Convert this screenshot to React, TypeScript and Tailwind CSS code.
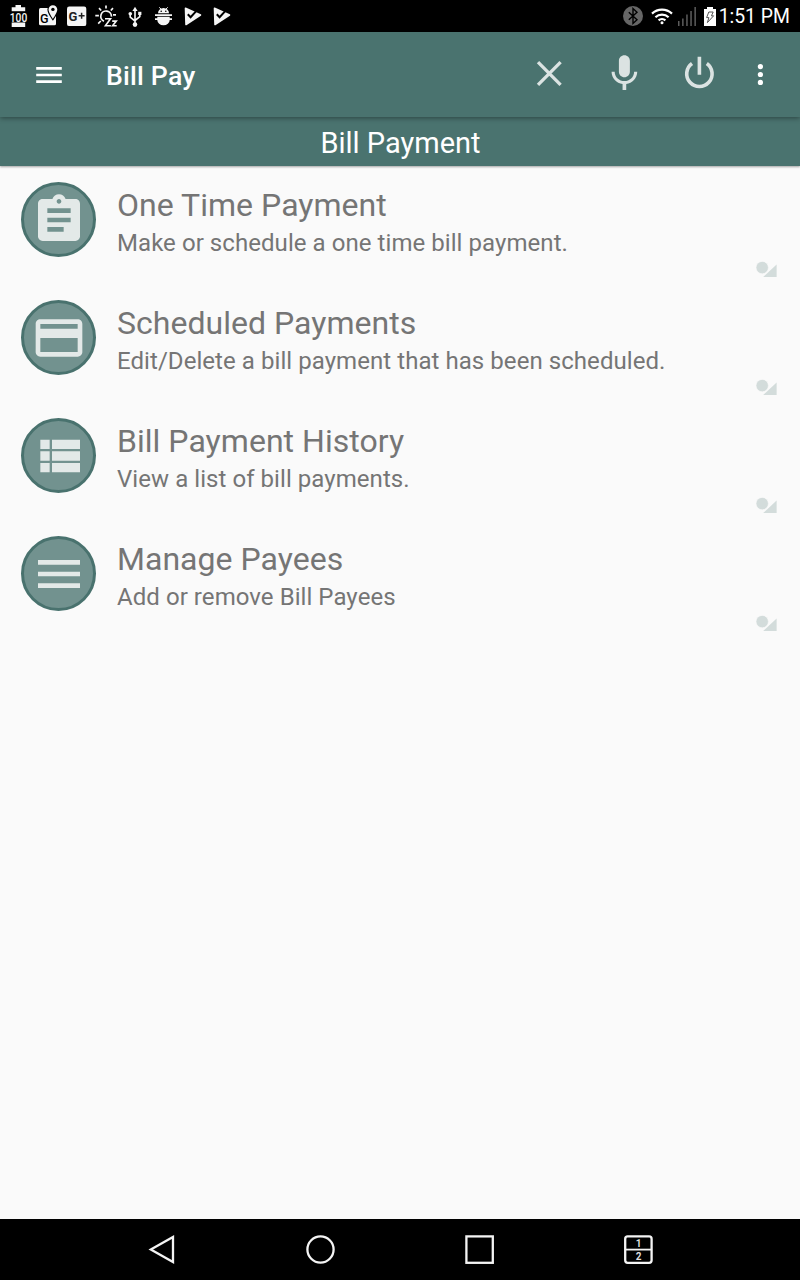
import React from 'react'

type MenuItem = {
  title: string
  description: string
  icon: string
}

const menuItems: MenuItem[] = [
  {
    title: 'One Time Payment',
    description: 'Make or schedule a one time bill payment.',
    icon: 'M19 3h-4.18C14.4 1.84 13.3 1 12 1c-1.3 0-2.4.84-2.82 2H5c-1.1 0-2 .9-2 2v14c0 1.1.9 2 2 2h14c1.1 0 2-.9 2-2V5c0-1.1-.9-2-2-2zm-7 0c.55 0 1 .45 1 1s-.45 1-1 1-1-.45-1-1 .45-1 1-1zm2 14H7v-2h7v2zm3-4H7v-2h10v2zm0-4H7V7h10v2z',
  },
  {
    title: 'Scheduled Payments',
    description: 'Edit/Delete a bill payment that has been scheduled.',
    icon: 'M20 4H4c-1.11 0-1.99.89-1.99 2L2 18c0 1.11.89 2 2 2h16c1.11 0 2-.89 2-2V6c0-1.11-.89-2-2-2zm0 14H4v-6h16v6zm0-10H4V6h16v2z',
  },
  {
    title: 'Bill Payment History',
    description: 'View a list of bill payments.',
    icon: 'M4 14h4v-4H4v4zm0 5h4v-4H4v4zM4 9h4V5H4v4zm5 5h12v-4H9v4zm0 5h12v-4H9v4zM9 5v4h12V5H9z',
  },
  {
    title: 'Manage Payees',
    description: 'Add or remove Bill Payees',
    icon: 'M3 18h18v-2H3v2zm0-5h18v-2H3v2zm0-7v2h18V6H3z',
  },
]

const StatusIcon: React.FC<{ children: React.ReactNode }> = ({ children }) => (
  <svg width="29" height="32" viewBox="0 0 29 32" fill="#f5f5f5" className="shrink-0">
    {children}
  </svg>
)

const PlayCheckIcon = () => (
  <StatusIcon>
    <path
      d="M7.5 8.2 L22.5 15 L8 24.5 Z"
      stroke="#f5f5f5"
      strokeWidth="1.6"
      strokeLinejoin="round"
    />
    <path d="M9.8 14.2 L12.6 17.2 L18.4 10.8" fill="none" stroke="#000" strokeWidth="2" />
  </StatusIcon>
)

const StatusBar = () => (
  <div className="flex h-8 items-center justify-between bg-black pl-1 pr-[10px] text-white">
    <div className="flex">
      {/* battery level */}
      <StatusIcon>
        <path d="M11.5 5h5.5v2.2h4.2V27H7.7V7.2h3.8z" />
        {/* dark band behind the digits */}
        <path d="M6 11.2h17v11.3H6z" fill="#000" />
        <text
          x="5.8"
          y="21.5"
          textLength="17.4"
          lengthAdjust="spacingAndGlyphs"
          className="font-['Roboto'] text-[13px] font-medium"
        >
          100
        </text>
      </StatusIcon>
      {/* maps */}
      <StatusIcon>
        <rect x="6" y="8" width="17" height="17.3" rx="1.5" />
        <text x="7" y="23" fill="#000" className="font-['Roboto'] text-[12.5px] font-medium">
          G
        </text>
        <path
          d="M19.9 5.2a4.4 4.4 0 0 0-4.4 4.4c0 3 4.4 9.3 4.4 9.3s4.4-6.3 4.4-9.3a4.4 4.4 0 0 0-4.4-4.4z"
          stroke="#000"
          strokeWidth="2.2"
          className="[paint-order:stroke]"
        />
        <circle cx="19.9" cy="9.4" r="1.7" fill="#000" />
      </StatusIcon>
      {/* google plus */}
      <StatusIcon>
        <rect x="5" y="6.5" width="19.3" height="19.6" rx="2.2" />
        <text x="6.4" y="20.9" fill="#222" className="font-['Roboto'] text-[13px] font-bold">
          G
        </text>
        <path d="M16.6 15.8h6M19.6 12.8v6" fill="none" stroke="#222" strokeWidth="1.5" />
      </StatusIcon>
      {/* sleep */}
      <StatusIcon>
        <g fill="none" stroke="#f5f5f5" strokeWidth="1.7">
          <path d="M13 21.2a5.3 5.3 0 1 1 7.4-4.6" />
          <path d="M15 5.5v3M8 8.2l2.2 2.3M22 8.2l-2.2 2.3M4.3 15.7h3.6M7.2 23.6l2.6-2.6M22 14.8h3" />
          <path d="M14 18.8h5.5l-5.1 7h5.5M21.2 21.1h4.1l-3.7 4.7h4.1" strokeWidth="1.6" />
        </g>
      </StatusIcon>
      {/* usb */}
      <StatusIcon>
        <g fill="none" stroke="#f5f5f5" strokeWidth="1.6">
          <path d="M15 10v14M10.2 14v3.2l4.8 3.8M19.8 14.5v2.2L15 20.5" />
        </g>
        <path d="M15 6.8l2.6 4.2h-5.2z" />
        <circle cx="10.3" cy="13.8" r="1.8" />
        <rect x="18.2" y="11.8" width="3.2" height="3.2" />
        <circle cx="15" cy="24.6" r="2.3" />
      </StatusIcon>
      {/* android debug */}
      <StatusIcon>
        <path d="M10.3 7.3l1.9 2M18.7 7.3l-1.9 2" stroke="#f5f5f5" strokeWidth="1" />
        <path d="M9 13.3a5.5 5.2 0 0 1 11 0z" />
        <path d="M6 14.3h17v1.6H6zM6 18.3h17v1.6H6z" />
        <path d="M8.3 16.8h12.4v3.2a6.2 5.2 0 0 1-12.4 0z" />
        <circle cx="12.2" cy="11.2" r=".8" fill="#000" />
        <circle cx="16.8" cy="11.2" r=".8" fill="#000" />
      </StatusIcon>
      <PlayCheckIcon />
      <PlayCheckIcon />
    </div>

    <div className="flex items-center">
      {/* bluetooth */}
      <svg width="20" height="20" viewBox="0 0 20 20">
        <circle cx="10" cy="10" r="10" fill="#666" />
        <path
          d="M5.8 6.2l8.2 7.6-4 3.6V2.6l4 3.6-8.2 7.6"
          fill="none"
          stroke="#000"
          strokeWidth="1.4"
        />
      </svg>
      {/* wifi */}
      <svg width="22" height="17" viewBox="0 0 22 17" className="ml-2">
        <g fill="none" stroke="#fff" strokeWidth="2.2">
          <path d="M1 5.6a14.5 14.5 0 0 1 20 0" />
          <path d="M4.4 9.2a9.6 9.6 0 0 1 13.2 0" />
          <path d="M7.6 12.4a5 5 0 0 1 6.8 0" />
        </g>
        <circle cx="11" cy="14.7" r="1.5" fill="#fff" />
      </svg>
      {/* signal */}
      <svg width="19" height="20" viewBox="0 0 19 20" className="ml-[5px]" fill="#5c5c5c">
        <path d="M0 15h1.5v5H0zM4.1 12.5h1.5V20H4.1zM8.2 8.5h1.5V20H8.2zM12.3 5h1.5v15h-1.5zM16.4 1h1.5v19h-1.5z" />
      </svg>
      {/* charging */}
      <svg width="12" height="19" viewBox="0 0 12 19" className="ml-[7px]">
        <path d="M3 0h6v2h3v17H0V2h3z" fill="#fff" />
        <path
          d="M4.8 5h4.4L7.4 8.8h2.2L3.4 15.6l1.5-5H2.6z"
          fill="none"
          stroke="#555"
          strokeWidth="1"
        />
      </svg>
      <span className="ml-[3px] pt-0.5 text-[19.4px] leading-[30px]">1:51 PM</span>
    </div>
  </div>
)

const AppBar = () => (
  <header className="relative z-10 flex h-[85px] items-center bg-[#4a736f] pl-9 text-white shadow-[0_1px_5px_rgba(0,0,0,0.42)]">
    <svg width="26" height="18" viewBox="0 0 26 18" fill="#fff" className="mt-px">
      <path d="M.2 1.1h25.6v2.6H.2zM.2 7.7h25.6v2.6H.2zM.2 14.3h25.6v2.6H.2z" />
    </svg>
    <h1 className="ml-11 pt-0.5 text-[26.67px] font-medium leading-8 tracking-[0.2px]">
      Bill Pay
    </h1>

    <div className="ml-auto flex h-full items-center text-[#dbe3e2]">
      <svg width="75" height="44" viewBox="0 0 75 44" className="-mt-[3px]">
        <path
          d="M26 11.1l22.6 22.8M48.6 11.1L26 33.9"
          stroke="currentColor"
          strokeWidth="3.3"
        />
      </svg>
      <svg width="75" height="44" viewBox="0 0 75 44" className="-mt-[3px]" fill="currentColor">
        <path
          transform="translate(15.4 .5) scale(1.8333)"
          d="M12 14c1.66 0 2.99-1.34 2.99-3L15 5c0-1.66-1.34-3-3-3S9 3.34 9 5v6c0 1.66 1.34 3 3 3zm5.3-3c0 3-2.54 5.1-5.3 5.1S6.7 14 6.7 11H5c0 3.41 2.72 6.23 6 6.72V21h2v-3.28c3.28-.48 6-3.3 6-6.72h-1.7z"
        />
      </svg>
      <svg width="75" height="44" viewBox="0 0 75 44" className="-mt-[3px]" fill="none">
        <path
          d="M37.4 5.8v18M30 12.5a12.7 12.7 0 1 0 14.8 0"
          stroke="currentColor"
          strokeWidth="3.6"
        />
      </svg>
      <svg width="63" height="44" viewBox="0 0 63 44" fill="#fff">
        <circle cx="23.4" cy="13.6" r="2.6" />
        <circle cx="23.4" cy="21.5" r="2.6" />
        <circle cx="23.4" cy="29.4" r="2.6" />
      </svg>
    </div>
  </header>
)

const MenuRow: React.FC<{ item: MenuItem }> = ({ item }) => (
  <li className="relative flex h-[118px] pl-[21px] pt-4">
    <div className="flex h-[75px] w-[75px] shrink-0 items-center justify-center rounded-full border-[3px] border-[#49726e] bg-[#72928f]">
      <svg width="56" height="56" viewBox="0 0 24 24" fill="#e3e9e8" className="shrink-0">
        <path d={item.icon} />
      </svg>
    </div>
    <div className="ml-[21px] text-[#757575]">
      <h3 className="mt-1 text-[32px] leading-[38px] tracking-[0.03px]">{item.title}</h3>
      <p className="text-[24px] leading-[38px] tracking-[0.06px]">{item.description}</p>
    </div>
    <svg
      width="22"
      height="17"
      viewBox="0 0 22 17"
      fill="#d3dcdb"
      className="absolute right-[22px] top-[95px]"
    >
      <path d="M20.6 3.5v12.6H7.2z" />
      <circle cx="6.2" cy="6.6" r="6.2" stroke="#fafafa" strokeWidth="0.6" />
    </svg>
  </li>
)

const NavigationBar = () => (
  <nav className="flex h-[61px] items-center bg-black pl-[82px]">
    <svg width="159" height="61" viewBox="0 0 159 61" fill="none" stroke="#f4f4f4" strokeWidth="2.3">
      <path d="M68.8 30.5L91 17.9v25.2z" />
    </svg>
    <svg width="159" height="61" viewBox="0 0 159 61" fill="none" stroke="#f4f4f4" strokeWidth="2.3">
      <circle cx="79.5" cy="30.5" r="13.1" />
    </svg>
    <svg width="159" height="61" viewBox="0 0 159 61" fill="none" stroke="#f4f4f4" strokeWidth="2.3">
      <rect x="66.4" y="17.4" width="26.4" height="26.4" />
    </svg>
    <svg width="159" height="61" viewBox="0 0 159 61" fill="none" stroke="#f4f4f4" strokeWidth="2.3">
      <rect x="66.2" y="17.4" width="26.4" height="26.4" rx="2.5" />
      <path d="M66.2 30.6h26.4" strokeWidth="1.8" />
      <g fill="#ddd" stroke="none" textAnchor="middle" className="font-['Roboto'] text-[10px] font-bold">
        <text x="79.5" y="27.6">1</text>
        <text x="79.5" y="40.8">2</text>
      </g>
    </svg>
  </nav>
)

export default function App() {
  return (
    <div className="flex h-[1280px] w-[800px] flex-col overflow-hidden bg-[#fafafa] font-['Roboto',sans-serif]">
      <StatusBar />
      <AppBar />
      <h2 className="h-[49px] shrink-0 bg-[#4a736f] pl-px pt-0.5 text-center text-[29px] leading-[49px] text-white shadow-[0_1px_2px_rgba(0,0,0,0.35)]">
        Bill Payment
      </h2>
      <main className="flex-1">
        <ul>
          {menuItems.map((item) => (
            <MenuRow key={item.title} item={item} />
          ))}
        </ul>
      </main>
      <NavigationBar />
    </div>
  )
}
